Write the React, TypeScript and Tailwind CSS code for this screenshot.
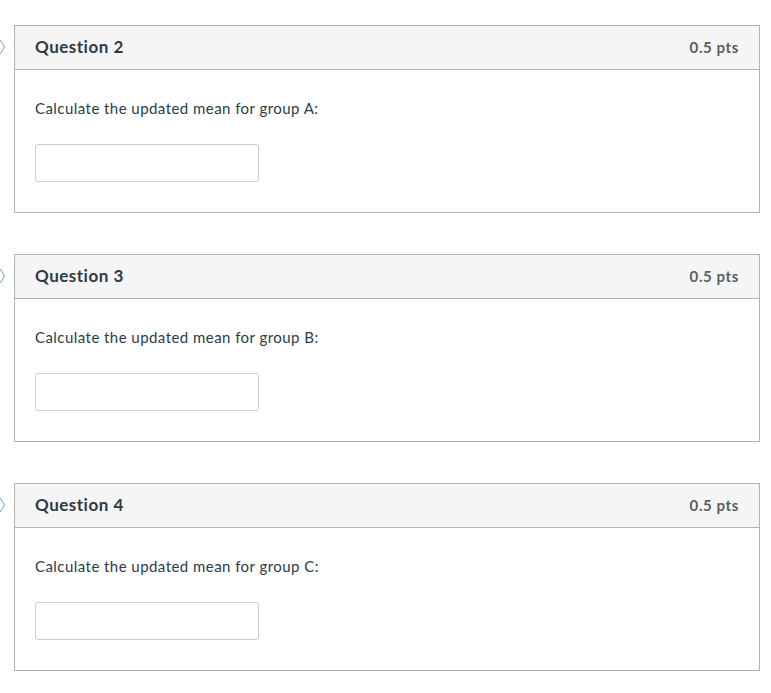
import React from 'react';

interface QuestionProps {
  number: number;
  group: string;
}

const Question: React.FC<QuestionProps> = ({ number, group }) => {
  return (
    <div className="relative">
      {/* flag marker peeking in from the left edge */}
      <svg
        className="absolute left-[-16px] top-[14px]"
        width="8"
        height="16"
        viewBox="0 0 8 16"
      >
        <path d="M0 1.5 L2.5 1.5 L6.5 8 L2.5 14.5 L0 14.5" fill="none" stroke="#8fb4d0" strokeWidth="1.2" />
      </svg>
      <div className="border border-[#b3b3b3] bg-white">
        <div className="flex h-[44px] items-center justify-between border-b border-[#b3b3b3] bg-[#f5f5f5] pl-5 pr-5">
          <span className="text-[17px] font-bold tracking-[0.5px] text-[#2d3b45] leading-none pb-[2px]">
            Question {number}
          </span>
          <span className="text-[15px] font-bold tracking-[0.6px] text-[#555f66] leading-none">0.5 pts</span>
        </div>
        <div className="px-5 pt-[28px] pb-[30px]">
          <p className="text-[15px] leading-[20px] tracking-[0.45px] text-[#2d3b45]">
            Calculate the updated mean for group {group}:
          </p>
          <input
            type="text"
            className="mt-[26px] block h-[38px] w-[224px] rounded-[3px] border border-[#c7cdd1] bg-white px-2 outline-none"
          />
        </div>
      </div>
    </div>
  );
};

export default function App() {
  return (
    <div className="min-h-screen bg-white" style={{ fontFamily: 'Lato, "Noto Sans", sans-serif' }}>
      <div className="ml-[14px] mr-[11px] flex flex-col gap-[41px] pt-[25px]">
        <Question number={2} group="A" />
        <Question number={3} group="B" />
        <Question number={4} group="C" />
      </div>
    </div>
  );
}
